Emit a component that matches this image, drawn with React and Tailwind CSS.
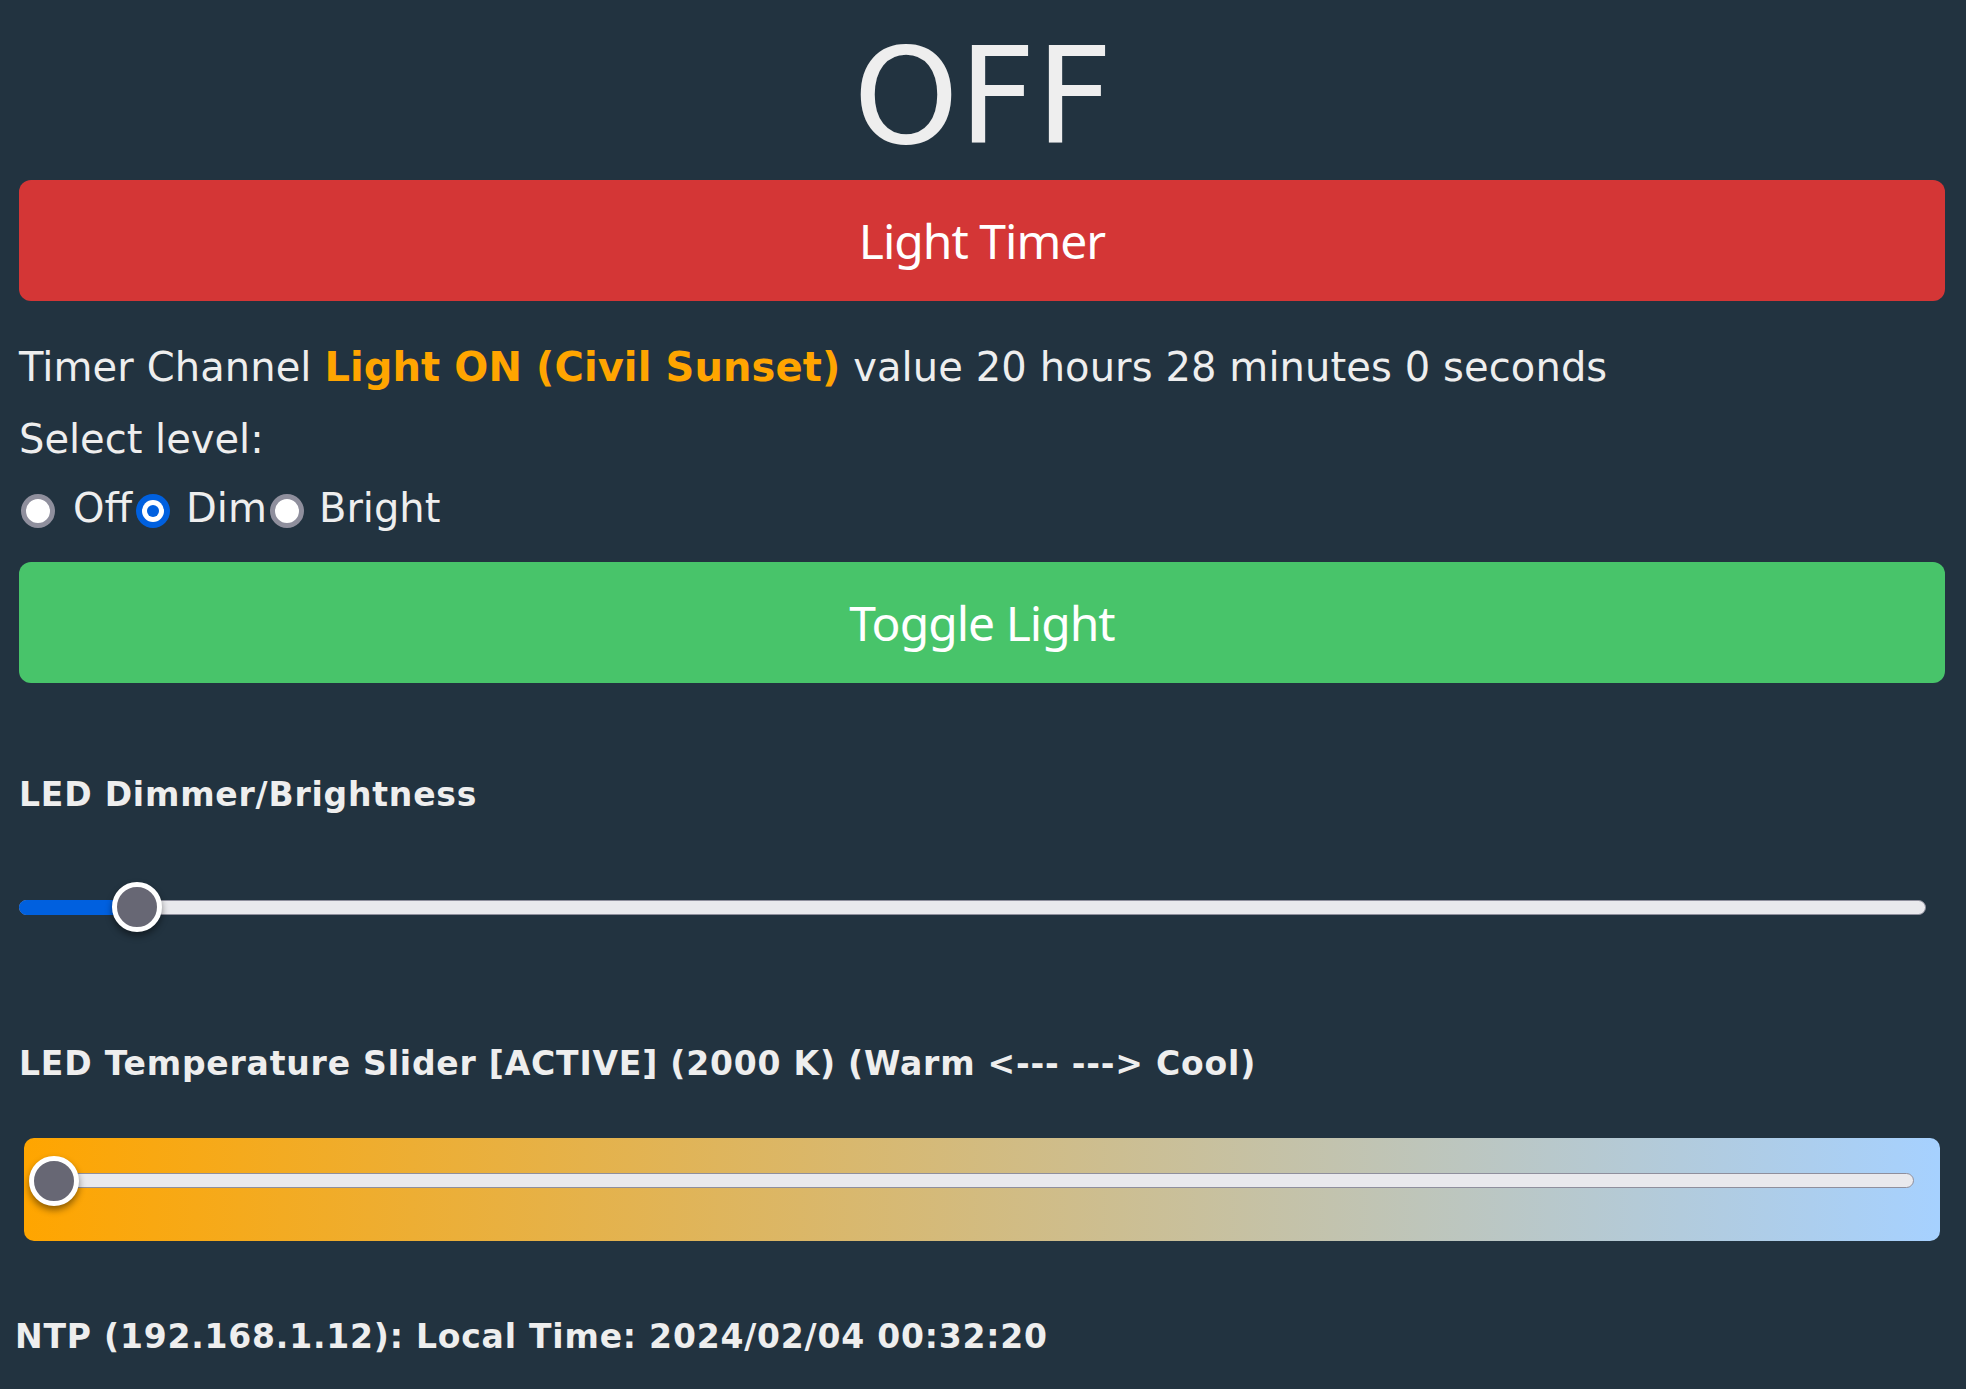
import React from 'react'

const sans = { fontFamily: '"DejaVu Sans", Verdana, sans-serif' }
const btnFont = { fontFamily: '"Noto Sans", "Open Sans", sans-serif' }

function Radio({ checked, className = '' }) {
  if (checked) {
    return (
      <span className={`inline-flex w-[34px] h-[34px] shrink-0 rounded-full bg-[#0060df] items-center justify-center ${className}`}>
        <span className="w-[22px] h-[22px] rounded-full bg-white flex items-center justify-center">
          <span className="w-[12px] h-[12px] rounded-full bg-[#0060df]" />
        </span>
      </span>
    )
  }
  return (
    <span className={`inline-block w-[34px] h-[34px] shrink-0 rounded-full bg-white border-[5px] border-[#8f8f9d] ${className}`} />
  )
}

function Thumb({ left }) {
  return (
    <span
      className="absolute top-1/2 -translate-y-1/2 w-[50px] h-[50px] rounded-full bg-[#676774] border-[5px] border-white shadow-[0_4px_7px_rgba(0,0,0,0.45)]"
      style={{ left }}
    />
  )
}

export default function App() {
  return (
    <div className="min-h-screen w-full bg-[#223340] text-[#eeeeee] px-[19px] pt-[19px] pb-[30px]" style={sans}>
      <div className="h-[156px] text-center text-[134px] leading-[156px]">OFF</div>

      <button
        type="button"
        className="mt-[5px] w-[calc(100%-2px)] h-[121px] rounded-[12px] bg-[#d43636] text-white text-[48px] tracking-[-1px] flex items-center justify-center"
        style={btnFont}
      >
        Light Timer
      </button>

      <div className="mt-[43px] text-[40px] leading-[46px] whitespace-nowrap tracking-[0.1px]">
        Timer Channel <span className="font-bold text-[#ffa500]">Light ON (Civil Sunset)</span> value 20 hours 28 minutes 0 seconds
      </div>

      <div className="mt-[26px] text-[40px] leading-[46px]">Select level:</div>

      <div className="mt-[23px] h-[46px] flex items-center text-[40px] leading-[46px]">
        <Radio className="ml-[2px] mt-[6px]" />
        <span className="ml-[18px]">Off</span>
        <Radio checked className="ml-[4px] mt-[6px]" />
        <span className="ml-[16px]">Dim</span>
        <Radio className="ml-[3px] mt-[6px]" />
        <span className="ml-[15px]">Bright</span>
      </div>

      <button
        type="button"
        className="mt-[31px] w-[calc(100%-2px)] h-[121px] rounded-[12px] bg-[#48c46a] text-white text-[48px] tracking-[-1px] flex items-center justify-center"
        style={btnFont}
      >
        Toggle Light
      </button>

      <div className="mt-[93px] text-[33px] leading-[37px] font-bold tracking-[0.8px]">LED Dimmer/Brightness</div>

      <div className="mt-[69px] h-[50px] mr-[21px] flex items-center">
        <div className="relative w-full h-[15px] rounded-full bg-[#e9e9ed] border border-[#8f8f9d]">
          <div className="absolute -left-px -top-px h-[15px] w-[120px] rounded-l-full bg-[#0060df]" />
          <Thumb left="92px" />
        </div>
      </div>

      <div className="mt-[113px] text-[33px] leading-[37px] font-bold tracking-[0.8px] whitespace-nowrap">
        LED Temperature Slider [ACTIVE] (2000 K) (Warm &lt;--- ---&gt; Cool)
      </div>

      <div className="mt-[56px] ml-[5px] mr-[7px] h-[103px] rounded-[10px] bg-[linear-gradient(to_right,#ffa500,#a6d1ff)] flex items-start pt-[35px] pl-[5px] pr-[26px]">
        <div className="relative w-full h-[15px] rounded-full bg-[#e9e9ed] border border-[#8f8f9d]">
          <Thumb left="-1px" />
        </div>
      </div>

      <div className="mt-[77px] -ml-[4px] text-[33px] leading-[37px] font-bold tracking-[0.8px]">
        NTP (192.168.1.12): Local Time: 2024/02/04 00:32:20
      </div>
    </div>
  )
}
